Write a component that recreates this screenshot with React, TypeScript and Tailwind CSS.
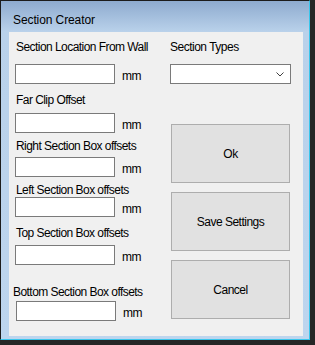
import React from 'react';

const font = { fontFamily: '"Liberation Sans", Arial, sans-serif' };

interface FieldProps {
  label: string;
  labelClass: string;
  inputClass: string;
}

const Field: React.FC<FieldProps> = ({ label, labelClass, inputClass }) => (
  <>
    <div className={`h-[14px] leading-[14px] text-[12px] tracking-[-0.55px] text-black whitespace-nowrap ${labelClass}`}>{label}</div>
    <div className={`flex items-end ${inputClass}`}>
      <div className="w-[100px] h-[20px] bg-white border border-[#7a7a7a]" />
      <span className="ml-[7px] mb-[1px] text-[12px] tracking-[-0.4px] leading-[14px] text-black">mm</span>
    </div>
  </>
);

const Button: React.FC<{ label: string; className?: string }> = ({ label, className }) => (
  <button className={`w-[119px] h-[59px] bg-[#e1e1e1] border border-[#adadad] text-[12px] tracking-[-0.5px] text-black flex items-center justify-center ${className ?? ''}`}>
    {label}
  </button>
);

export default function App() {
  return (
    <div className="w-[315px] h-[345px] bg-[#262626]" style={font}>
      <div className="w-[310px] h-[340px] border-t border-l border-t-[#1c1c1c] border-l-[#1c1c1c] border-r border-b border-r-[#39c6ec] border-b-[#39c6ec] bg-linear-to-b from-[#8eabcf] via-[#b9d1ea] via-[9%] to-[#bdd5ee]">
        <div className="h-[31px] pl-[12px] pt-[11px] text-[12px] tracking-[-0.1px] leading-[16px] text-black">Section Creator</div>
        <div className="ml-[8px] w-[294px] h-[304px] bg-[#f0f0f0] flex">
          {/* left column */}
          <div className="w-[161px] pl-[6px] flex flex-col">
            <Field label="Section Location From Wall" labelClass="mt-[8px] ml-[1px]" inputClass="mt-[10px]" />
            <Field label="Far Clip Offset" labelClass="mt-[9px] ml-[1px]" inputClass="mt-[6px]" />
            <Field label="Right Section Box offsets" labelClass="mt-[6px] ml-[1px]" inputClass="mt-[4px]" />
            <Field label="Left Section Box offsets" labelClass="mt-[6px] ml-[1px]" inputClass="mt-0" />
            <Field label="Top Section Box offsets" labelClass="mt-[9px] ml-[1px]" inputClass="mt-[5px]" />
            <Field label="Bottom Section Box offsets" labelClass="mt-[20px] -ml-[2px]" inputClass="mt-[2px] ml-[1px]" />
          </div>
          {/* right column */}
          <div className="flex flex-col">
            <div className="mt-[8px] h-[14px] leading-[14px] text-[12px] tracking-[-0.5px] text-black">Section Types</div>
            <div className="mt-[10px] w-[121px] h-[20px] bg-white border border-[#7a7a7a] flex items-center justify-end pr-[6px]">
              <svg width="8" height="5" viewBox="0 0 8 5">
                <polyline points="0.5,0.5 4,4 7.5,0.5" fill="none" stroke="#404040" strokeWidth="1" />
              </svg>
            </div>
            <Button label="Ok" className="mt-[40px] ml-[1px]" />
            <Button label="Save Settings" className="mt-[9px] ml-[1px]" />
            <Button label="Cancel" className="mt-[9px] ml-[1px]" />
          </div>
        </div>
      </div>
    </div>
  );
}
